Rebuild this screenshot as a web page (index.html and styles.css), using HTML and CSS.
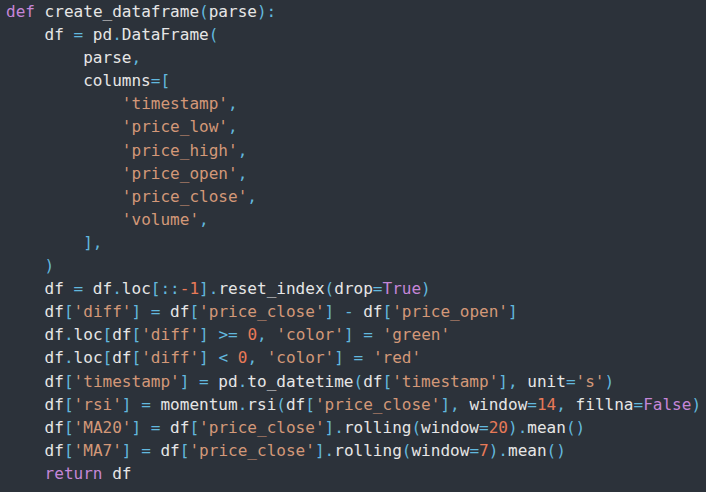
FILE: index.html
```html
<!DOCTYPE html>
<html>
<head>
<meta charset="utf-8">
<link rel="stylesheet" href="styles.css">
</head>
<body>
<pre class="code"><span class="k">def</span> create_dataframe<span class="p">(</span>parse<span class="p">):</span>
    df <span class="p">=</span> pd<span class="p">.</span>DataFrame<span class="p">(</span>
        parse<span class="p">,</span>
        columns<span class="p">=[</span>
            <span class="s">'timestamp'</span><span class="p">,</span>
            <span class="s">'price_low'</span><span class="p">,</span>
            <span class="s">'price_high'</span><span class="p">,</span>
            <span class="s">'price_open'</span><span class="p">,</span>
            <span class="s">'price_close'</span><span class="p">,</span>
            <span class="s">'volume'</span><span class="p">,</span>
        <span class="p">],</span>
    <span class="p">)</span>
    df <span class="p">=</span> df<span class="p">.</span>loc<span class="p">[::</span><span class="n">-1</span><span class="p">].</span>reset_index<span class="p">(</span>drop<span class="p">=</span><span class="k">True</span><span class="p">)</span>
    df<span class="p">[</span><span class="s">'diff'</span><span class="p">]</span> <span class="p">=</span> df<span class="p">[</span><span class="s">'price_close'</span><span class="p">]</span> <span class="p">-</span> df<span class="p">[</span><span class="s">'price_open'</span><span class="p">]</span>
    df<span class="p">.</span>loc<span class="p">[</span>df<span class="p">[</span><span class="s">'diff'</span><span class="p">]</span> <span class="p">&gt;=</span> <span class="n">0</span><span class="p">,</span> <span class="s">'color'</span><span class="p">]</span> <span class="p">=</span> <span class="s">'green'</span>
    df<span class="p">.</span>loc<span class="p">[</span>df<span class="p">[</span><span class="s">'diff'</span><span class="p">]</span> <span class="p">&lt;</span> <span class="n">0</span><span class="p">,</span> <span class="s">'color'</span><span class="p">]</span> <span class="p">=</span> <span class="s">'red'</span>
    df<span class="p">[</span><span class="s">'timestamp'</span><span class="p">]</span> <span class="p">=</span> pd<span class="p">.</span>to_datetime<span class="p">(</span>df<span class="p">[</span><span class="s">'timestamp'</span><span class="p">],</span> unit<span class="p">=</span><span class="s">'s'</span><span class="p">)</span>
    df<span class="p">[</span><span class="s">'rsi'</span><span class="p">]</span> <span class="p">=</span> momentum<span class="p">.</span>rsi<span class="p">(</span>df<span class="p">[</span><span class="s">'price_close'</span><span class="p">],</span> window<span class="p">=</span><span class="n">14</span><span class="p">,</span> fillna<span class="p">=</span><span class="k">False</span><span class="p">)</span>
    df<span class="p">[</span><span class="s">'MA20'</span><span class="p">]</span> <span class="p">=</span> df<span class="p">[</span><span class="s">'price_close'</span><span class="p">].</span>rolling<span class="p">(</span>window<span class="p">=</span><span class="n">20</span><span class="p">).</span>mean<span class="p">()</span>
    df<span class="p">[</span><span class="s">'MA7'</span><span class="p">]</span> <span class="p">=</span> df<span class="p">[</span><span class="s">'price_close'</span><span class="p">].</span>rolling<span class="p">(</span>window<span class="p">=</span><span class="n">7</span><span class="p">).</span>mean<span class="p">()</span>
    <span class="k">return</span> df</pre>
</body>
</html>
```

FILE: styles.css
```css
html, body {
  margin: 0;
  padding: 0;
  background: #2c323a;
  overflow: hidden;
}
.code {
  margin: 0;
  padding: 0 0 0 6px;
  font-family: "DejaVu Sans Mono", monospace;
  font-size: 16.05px;
  line-height: 23.1px;
  color: #e6e6e6;
  white-space: pre;
}
.k { color: #c586d8; }
.p { color: #62b8de; }
.s { color: #d39878; }
.n { color: #e87a58; }
```
